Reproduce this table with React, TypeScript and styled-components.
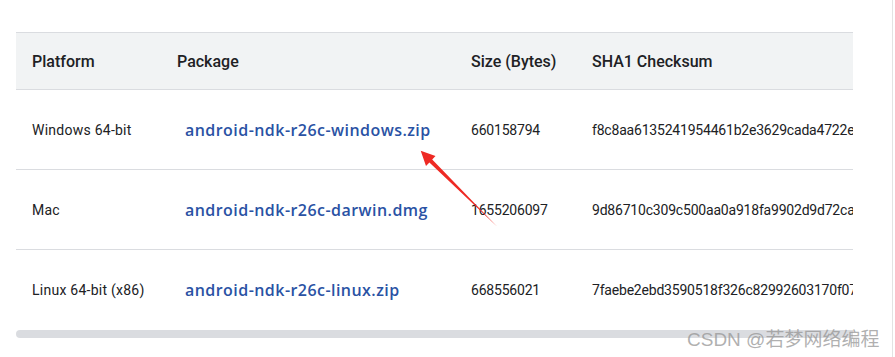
import styled, { createGlobalStyle } from "styled-components";

const GlobalStyle = createGlobalStyle`
  html, body {
    margin: 0;
    padding: 0;
    background: #ffffff;
  }
  body {
    font-family: Roboto, "Noto Sans", Arial, sans-serif;
    color: #202124;
  }
`;

const Page = styled.div`
  position: relative;
  width: 893px;
  height: 357px;
  border-right: 1px solid #e3e3e3;
  padding: 32px 0 0 16px;
  box-sizing: border-box;
`;

const Scroller = styled.div`
  width: 837px;
  overflow: hidden;
`;

const Table = styled.table`
  border-collapse: collapse;
  table-layout: fixed;
  width: 1000px;
`;

const HeadCell = styled.th<{ $w?: number }>`
  width: ${(p) => (p.$w ? `${p.$w}px` : "auto")};
  height: 57px;
  padding: 0 16px;
  box-sizing: border-box;
  background: #f1f3f4;
  border-top: 1px solid #dadce0;
  border-bottom: 1px solid #dadce0;
  text-align: left;
  font-size: 16px;
  font-weight: 500;
  color: #202124;
  white-space: nowrap;
`;

const Cell = styled.td<{ $num?: boolean }>`
  height: 80px;
  padding: 0 16px;
  box-sizing: border-box;
  border-bottom: 1px solid #dadce0;
  font-size: 14px;
  letter-spacing: ${(p) => (p.$num ? "-0.2px" : "0.25px")};
  color: #202124;
  white-space: nowrap;
  overflow: hidden;
`;

const LastRow = styled.tr`
  & > td {
    border-bottom: none;
    height: 80px;
  }
`;

const FileLink = styled.a`
  margin-left: 8px;
  font-family: "Open Sans", Roboto, sans-serif;
  font-size: 16px;
  font-weight: 600;
  color: #2a52a4;
  text-decoration: none;
  letter-spacing: 0.45px;
`;

const ScrollBar = styled.div`
  width: 900px;
  height: 8px;
  border-radius: 4px;
  background: #dadce0;
`;

const Arrow = styled.svg`
  position: absolute;
  left: 0;
  top: 0;
  pointer-events: none;
`;

const Watermark = styled.div`
  position: absolute;
  left: 687px;
  top: 324px;
  font-family: "Liberation Sans", "Noto Sans CJK SC", sans-serif;
  font-size: 19px;
  color: rgba(150, 150, 150, 0.75);
  white-space: nowrap;
`;

const rows = [
  {
    platform: "Windows 64-bit",
    file: "android-ndk-r26c-windows.zip",
    size: "660158794",
    sha: "f8c8aa6135241954461b2e3629cada4722e13ee7",
  },
  {
    platform: "Mac",
    file: "android-ndk-r26c-darwin.dmg",
    size: "1655206097",
    sha: "9d86710c309c500aa0a918fa9902d9d72ca0c52d",
  },
  {
    platform: "Linux 64-bit (x86)",
    file: "android-ndk-r26c-linux.zip",
    size: "668556021",
    sha: "7faebe2ebd3590518f326c82992603170f07c96e",
  },
];

export default function App() {
  return (
    <Page>
      <GlobalStyle />
      <Scroller>
        <Table>
          <thead>
            <tr>
              <HeadCell $w={145}>Platform</HeadCell>
              <HeadCell $w={294}>Package</HeadCell>
              <HeadCell $w={121}>Size (Bytes)</HeadCell>
              <HeadCell>SHA1 Checksum</HeadCell>
            </tr>
          </thead>
          <tbody>
            {rows.map((r, i) => {
              const cells = (
                <>
                  <Cell>{r.platform}</Cell>
                  <Cell>
                    <FileLink href="#">{r.file}</FileLink>
                  </Cell>
                  <Cell $num>{r.size}</Cell>
                  <Cell $num>{r.sha}</Cell>
                </>
              );
              return i === rows.length - 1 ? (
                <LastRow key={r.file}>{cells}</LastRow>
              ) : (
                <tr key={r.file}>{cells}</tr>
              );
            })}
          </tbody>
        </Table>
        <ScrollBar />
      </Scroller>

      <Arrow width="895" height="357" viewBox="0 0 895 357">
        <polygon
          points="420.7,150.7 435.5,156 432.2,159.6 497,226.5 429.4,162.4 426,166"
          fill="#ee2a24"
        />
      </Arrow>
      <Watermark>CSDN @若梦网络编程</Watermark>
    </Page>
  );
}
